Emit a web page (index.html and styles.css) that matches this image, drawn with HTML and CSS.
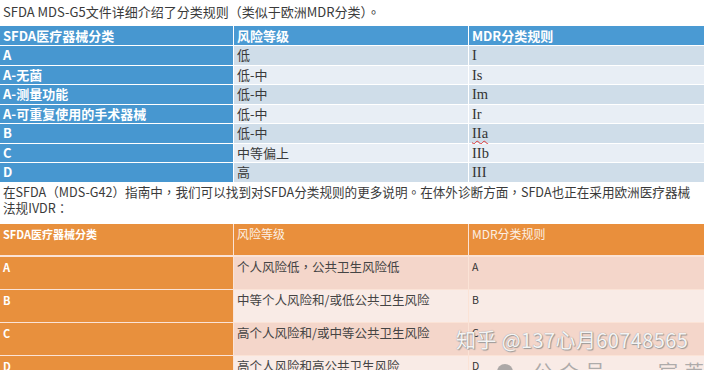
FILE: index.html
```html
<!DOCTYPE html>
<html lang="zh-CN">
<head>
<meta charset="utf-8">
<link rel="stylesheet" href="styles.css">
</head>
<body>
<div class="page">
  <div class="title">SFDA MDS-G5文件详细介绍了分类规则<span class="p" lang="zh-TW">（</span>类似于欧洲MDR分类<span class="p" lang="zh-TW">）。</span></div>
  <div class="t1">
    <div class="h c1">SFDA医疗器械分类</div><div class="h">风险等级</div><div class="h">MDR分类规则</div>
    <div class="c1">A</div><div class="c2 o">低</div><div class="c3 o">I</div>
    <div class="c1">A-无菌</div><div class="c2 e">低-中</div><div class="c3 e">Is</div>
    <div class="c1">A-测量功能</div><div class="c2 o">低-中</div><div class="c3 o">Im</div>
    <div class="c1">A-可重复使用的手术器械</div><div class="c2 e">低-中</div><div class="c3 e">Ir</div>
    <div class="c1">B</div><div class="c2 o">低-中</div><div class="c3 o"><span class="spell">IIa</span></div>
    <div class="c1">C</div><div class="c2 e">中等偏上</div><div class="c3 e">IIb</div>
    <div class="c1">D</div><div class="c2 o">高</div><div class="c3 o">III</div>
  </div>
  <p class="para">在SFDA<span class="p" lang="zh-TW">（</span>MDS-G42<span class="p" lang="zh-TW">）</span>指南中<span class="p" lang="zh-TW">，</span>我们可以找到对SFDA分类规则的更多说明<span class="p" lang="zh-TW">。</span>在体外诊断方面<span class="p" lang="zh-TW">，</span>SFDA也正在采用欧洲医疗器械法规IVDR<span class="p" lang="zh-TW">：</span></p>
  <div class="t2">
    <div class="h c1">SFDA医疗器械分类</div><div class="h">风险等级</div><div class="h">MDR分类规则</div>
    <div class="c1">A</div><div class="c2 o">个人风险低<span class="p" lang="zh-TW">，</span>公共卫生风险低</div><div class="c3 o">A</div>
    <div class="c1">B</div><div class="c2 e">中等个人风险和/或低公共卫生风险</div><div class="c3 e">B</div>
    <div class="c1">C</div><div class="c2 o">高个人风险和/或中等公共卫生风险</div><div class="c3 o">C</div>
    <div class="c1">D</div><div class="c2 e">高个人风险和高公共卫生风险</div><div class="c3 e">D</div>
  </div>
  <div class="wm1">知乎 @137心月60748565</div>
  <div class="wm2"><span class="dot"></span>公众号 · 宸莱咨询</div>
</div>
</body>
</html>
```
FILE: styles.css
```css
html, body {
  margin: 0;
  padding: 0;
  background: #fff;
}
body {
  font-family: "Noto Sans CJK SC", "Open Sans", sans-serif;
  color: #333;
}
.page {
  position: relative;
  width: 707px;
  height: 370px;
  overflow: hidden;
}
.p {
  font-family: "Noto Sans CJK TC", sans-serif;
}
.title {
  padding: 2px 0 0 3px;
  box-sizing: border-box;
  font-size: 13px;
  line-height: 20px;
  color: #3a3a3a;
  height: 26px;
}
.t1 {
  display: grid;
  width: 704px;
  grid-template-columns: 233px 234px 235px;
  column-gap: 1px;
  row-gap: 1px;
  grid-auto-rows: 18.5px;
  grid-template-rows: 19px;
  background: #fff;
}
.t1 > div {
  padding-left: 3px;
  font-size: 13px;
  line-height: 18.5px;
  white-space: nowrap;
}
.t1 .h {
  background: #4a9ad3;
  color: #fff;
  font-weight: bold;
  line-height: 19px;
}
.t1 .c1 {
  background: #4797d0;
  color: #fff;
  font-weight: bold;
}
.t1 .o { background: #cfdde9; }
.t1 .e { background: #e8eef5; }
.t1 .c2 { color: #3a3a3a; }
.t1 .c3 {
  font-family: "Liberation Serif", serif;
  font-size: 14.5px;
  color: #333;
}
.spell {
  text-decoration: underline wavy #d33;
  text-decoration-thickness: 1px;
  text-underline-offset: 2px;
}
.para {
  margin: 0 0 8px 0;
  padding: 2px 0 0 3px;
  width: 688px;
  font-size: 12.6px;
  line-height: 16px;
  color: #3a3a3a;
}
.t2 {
  display: grid;
  width: 704px;
  grid-template-columns: 233px 234px 235px;
  column-gap: 1px;
  row-gap: 1px;
  grid-template-rows: 32px;
  grid-auto-rows: 32px;
  background: #fbe3d6;
}
.t2 > div {
  padding: 3px 0 0 3px;
  box-sizing: border-box;
  line-height: 14px;
  white-space: nowrap;
}
.t2 .h {
  background: #e98f3c;
  color: #fcefe4;
  font-size: 12px;
  margin-bottom: 1px;
}
.t2 .c1 {
  background: #e8903d;
  color: #fff;
  font-weight: bold;
  font-size: 11px;
}
.t2 .c2 {
  font-size: 12.5px;
  color: #444;
}
.t2 .c3 {
  font-size: 10.5px;
  color: #333;
}
.t2 .o { background: #f4d6ca; }
.t2 .e { background: #f9ebe6; }
.wm1 {
  position: absolute;
  left: 456px;
  top: 327px;
  font-size: 20px;
  line-height: 26px;
  color: rgba(255, 255, 255, 0.92);
  text-shadow: 0 0 1px #8a8a8a, 1px 1px 1px #9a9a9a;
  white-space: nowrap;
  letter-spacing: 0.4px;
}
.wm2 {
  position: absolute;
  left: 497px;
  top: 359px;
  font-size: 20px;
  line-height: 26px;
  color: rgba(150, 150, 150, 0.75);
  white-space: nowrap;
  display: flex;
  align-items: center;
  gap: 20px;
  letter-spacing: 6px;
}
.dot {
  width: 16px;
  height: 16px;
  border-radius: 50%;
  background: rgba(140, 140, 140, 0.7);
}
```
